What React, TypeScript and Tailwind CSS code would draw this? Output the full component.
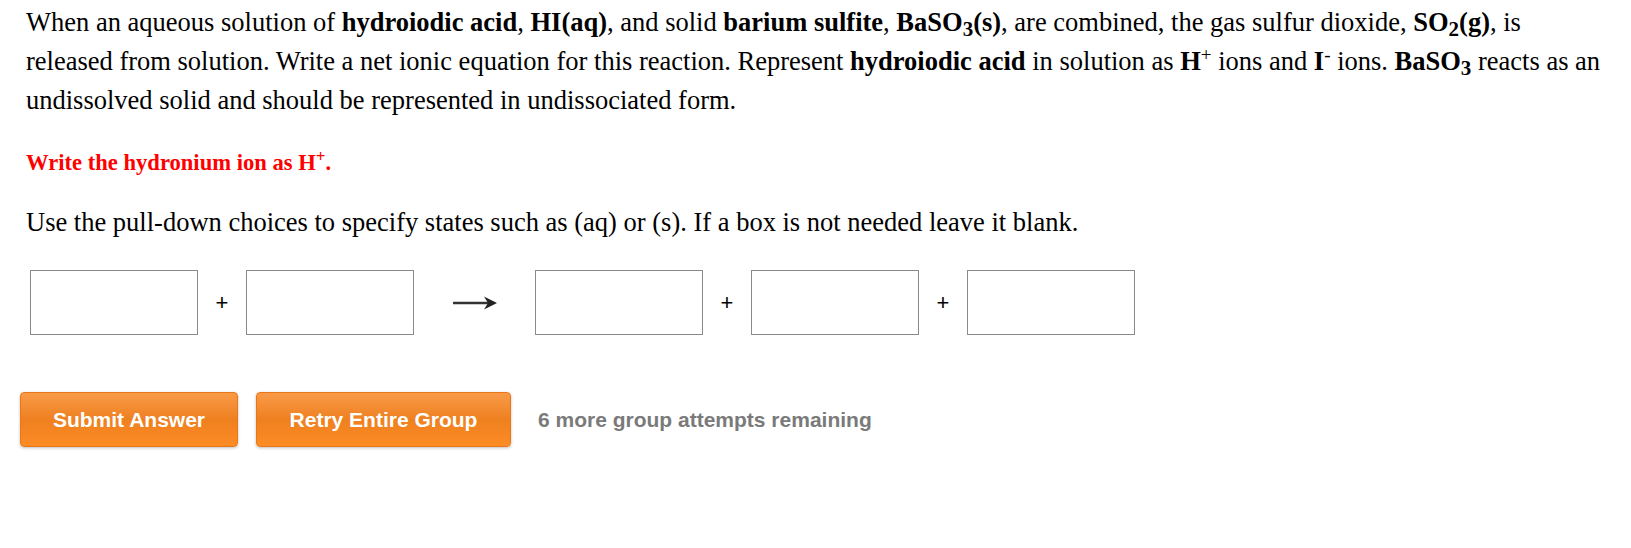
const serif = { fontFamily: '"Liberation Serif", "Times New Roman", serif' };

function Box() {
  return <div className="h-[65px] w-[168px] shrink-0 border border-[#8a8a8a] bg-white" />;
}

function Plus() {
  return (
    <span className="w-[48px] text-center font-['Liberation_Sans',Arial,sans-serif] text-[22px] leading-none text-black">
      +
    </span>
  );
}

function Arrow() {
  return (
    <div className="flex w-[121px] justify-center">
      <svg width="44" height="16" viewBox="0 0 44 16">
        <line x1="0" y1="8" x2="38" y2="8" stroke="#333" strokeWidth="2.4" />
        <path d="M31 1.5 L44 8 L31 14.5 L35 8 Z" fill="#222" />
      </svg>
    </div>
  );
}

function OrangeButton({ label, width }: { label: string; width: string }) {
  return (
    <button
      className={`${width} h-[55px] rounded-[4px] border border-[#e8771a] bg-gradient-to-b from-[#f99a46] via-[#ee801f] to-[#fd8c24] font-['Liberation_Sans',Arial,sans-serif] text-[21px] font-bold text-white shadow-[0_1px_3px_rgba(0,0,0,0.25)]`}
    >
      {label}
    </button>
  );
}

export default function App() {
  return (
    <div className="min-h-[548px] w-[1631px] bg-white">
      <div className="pl-[26px] pt-[3px]" style={serif}>
        <p className="w-[1582px] text-[26.5px] leading-[39px] text-black">
          When an aqueous solution of <b>hydroiodic acid</b>, <b>HI(aq)</b>, and solid{" "}
          <b>barium sulfite</b>, <b>BaSO<sub className="text-[21px]">3</sub>(s)</b>, are combined, the gas sulfur
          dioxide, <b>SO<sub className="text-[21px]">2</sub>(g)</b>, is released from solution. Write a net ionic
          equation for this reaction. Represent <b>hydroiodic acid</b> in solution as{" "}
          <b>H</b>
          <sup className="text-[19px]">+</sup> ions and <b>I</b>
          <sup className="text-[19px]">-</sup> ions. <b>BaSO<sub className="text-[21px]">3</sub></b> reacts as an
          undissolved solid and should be represented in undissociated form.
        </p>
        <p className="mt-[30px] text-[22.6px] leading-[26px] font-bold text-[#ff0000]">
          Write the hydronium ion as H<sup className="text-[17px]">+</sup>.
        </p>
        <p className="mt-[31px] text-[26.5px] leading-[30px] text-black">
          Use the pull-down choices to specify states such as (aq) or (s). If a box is not needed leave it blank.
        </p>
      </div>

      <div className="mt-[33px] flex items-center pl-[30px]">
        <Box />
        <Plus />
        <Box />
        <Arrow />
        <Box />
        <Plus />
        <Box />
        <Plus />
        <Box />
      </div>

      <div className="mt-[57px] flex items-center pl-[20px]">
        <OrangeButton label="Submit Answer" width="w-[218px]" />
        <div className="w-[18px]" />
        <OrangeButton label="Retry Entire Group" width="w-[255px]" />
        <span className="ml-[27px] font-['Liberation_Sans',Arial,sans-serif] text-[21px] font-bold text-[#7a7a7a]">
          6 more group attempts remaining
        </span>
      </div>
    </div>
  );
}
